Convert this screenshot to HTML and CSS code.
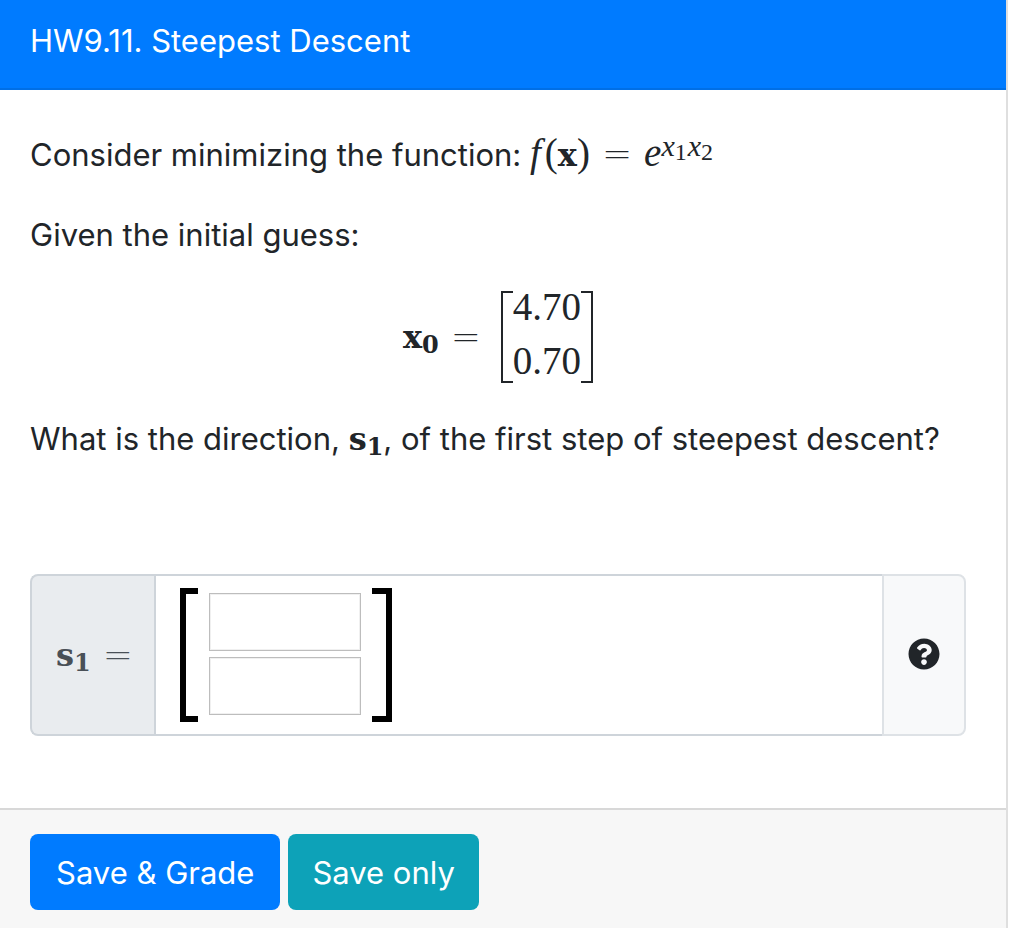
FILE: index.html
```html
<!DOCTYPE html>
<html lang="en">
<head>
<meta charset="utf-8">
<meta name="viewport" content="width=device-width, initial-scale=1">
<title>HW9.11. Steepest Descent</title>
<link rel="stylesheet" href="styles.css">
</head>
<body>
<form class="card">
  <header class="card-header"><h1 class="title">HW9.11. Steepest Descent</h1></header>
  <main class="card-body">
    <p class="text">Consider minimizing the function: <span class="math"><i class="fn">f</i>(<b class="vec">x</b>)<span class="equals">=</span><i>e</i><sup class="sup"><i>x</i><sub class="subsub">1</sub><i>x</i><sub class="subsub">2</sub></sup></span></p>
    <p class="text">Given the initial guess:</p>
    <div class="equation math">
      <span class="term"><b class="vec">x</b><sub class="sub">0</sub></span><span class="equals">=</span>
      <span class="vector"><span>4.70</span><span>0.70</span></span>
    </div>
    <p class="text">What is the direction, <span class="math"><b class="vec">s</b><sub class="sub">1</sub></span>, of the first step of steepest descent?</p>
    <div class="input-group">
      <div class="prefix math"><span class="term"><b class="vec">s</b><sub class="sub">1</sub></span><span class="equals">=</span></div>
      <div class="field">
        <div class="matrix">
          <span class="bracket bracket-left"></span>
          <div class="cells">
            <input class="cell" type="text" aria-label="s1, row 1">
            <input class="cell" type="text" aria-label="s1, row 2">
          </div>
          <span class="bracket bracket-right"></span>
        </div>
      </div>
      <button class="help" type="button" aria-label="Help">
        <svg class="help-icon" viewBox="0 0 512 512" aria-hidden="true"><path fill="currentColor" d="M504 256c0 137-111 248-248 248S8 393 8 256C8 119.100 119 8 256 8s248 111.100 248 248zM262.700 90c-54.500 0-89.300 23-116.500 63.800-3.500 5.300-2.400 12.400 2.700 16.300l34.700 26.300c5.200 3.900 12.600 3 16.700-2.100 17.900-22.700 30.100-35.800 57.300-35.800 20.400 0 45.700 13.100 45.700 33 0 15-12.400 22.700-32.500 34C247.100 238.500 216 254.900 216 296v4c0 6.600 5.400 12 12 12h56c6.600 0 12-5.400 12-12v-1.300c0-28.500 83.200-29.600 83.200-106.700 0-58-60.200-102-116.500-102zM256 338c-25.400 0-46 20.600-46 46s20.600 46 46 46 46-20.600 46-46-20.600-46-46-46z"/></svg>
      </button>
    </div>
  </main>
  <footer class="card-footer">
    <button class="btn btn-primary" type="button">Save &amp; Grade</button>
    <button class="btn btn-info" type="button">Save only</button>
  </footer>
</form>
</body>
</html>
```
FILE: styles.css
```css
* { box-sizing: border-box; }

body {
  margin: 0;
  background: #fff;
  color: #212529;
  font-family: Inter, "Liberation Sans", sans-serif;
  font-size: 31px;
  line-height: 48px;
}

.card {
  display: flex;
  flex-direction: column;
  min-height: 100vh;
  margin-right: 18px;
  border-right: 2px solid #dfdfdf;
}

.card-header {
  padding: 17px 30px 23px;
  background: #007bff;
  border-bottom: 2px solid #006fe6;
}

.title {
  margin: 0;
  font-size: 31px;
  font-weight: 400;
  line-height: 48px;
}

.card-header .title { color: #fff; }

.card-body { padding: 41px 40px 72px 30px; }

.text { margin: 0 0 32px; }

.math {
  font-family: "Liberation Serif", serif;
  font-size: 39px;
  line-height: 1;
}

.fn { margin-right: 4px; }

.vec {
  font-family: "DejaVu Serif", serif;
  font-size: 32px;
  line-height: 0;
}

.equals {
  margin: 0 12px;
  font-family: "DejaVu Sans Light", "DejaVu Sans", sans-serif;
  font-size: 36px;
  font-weight: 200;
  line-height: 0;
}

.sub {
  font-family: "DejaVu Serif", serif;
  font-size: 24px;
  font-weight: 700;
  line-height: 0;
  vertical-align: -5px;
}

.term { padding-bottom: 6px; }

.sup {
  font-size: 30px;
  line-height: 0;
  vertical-align: 10px;
}

.subsub {
  margin-right: 1px;
  font-size: 24px;
  line-height: 0;
  vertical-align: -4px;
}

.equation {
  display: flex;
  align-items: center;
  justify-content: center;
  margin-bottom: 32px;
}

.vector {
  position: relative;
  display: flex;
  flex-direction: column;
  justify-content: center;
  height: 92px;
  margin-left: 8px;
  padding: 0 12px 6px;
  line-height: 54px;
}

.vector::before,
.vector::after {
  content: "";
  position: absolute;
  top: 0;
  bottom: 0;
  width: 10px;
  border: 2px solid #212529;
}

.vector::before { left: 0; border-right: 0; }
.vector::after { right: 0; border-left: 0; }

.input-group {
  display: flex;
  min-height: 162px;
  margin-top: 111px;
}

.prefix {
  display: flex;
  align-items: center;
  width: 124px;
  padding-left: 24px;
  background: #e9ecef;
  border: 2px solid #ced4da;
  border-right: 0;
  border-radius: 8px 0 0 8px;
  color: #495057;
}

.field {
  flex: 1;
  display: flex;
  align-items: center;
  padding: 0 24px;
  border: 2px solid #ced4da;
  border-right: 0;
}

.matrix {
  display: flex;
  gap: 11px;
}

.bracket {
  width: 18px;
  border: 6px solid #000;
}

.bracket-left { border-right: 0; }
.bracket-right { width: 20px; border-left: 0; }

.cells {
  display: flex;
  flex-direction: column;
  gap: 6px;
  padding: 5px 0 7px;
}

.cell {
  width: 152px;
  height: 58px;
  padding: 2px 6px;
  border: 1px solid #bdbdbd;
  box-shadow: inset 0 0 0 1px #f0f0f0;
  background: #fff;
  color: inherit;
  font: inherit;
}

.help {
  display: flex;
  align-items: center;
  justify-content: center;
  width: 84px;
  padding: 0 0 2px;
  background: #f8f9fa;
  border: 2px solid #dee2e6;
  border-radius: 0 8px 8px 0;
  color: #212529;
}

.help-icon { width: 32px; height: 32px; }

.card-footer {
  flex: 1;
  display: flex;
  align-items: flex-start;
  gap: 8px;
  padding: 24px 30px 18px;
  background: #f7f7f7;
  border-top: 2px solid #d8d8d8;
}

.btn {
  padding: 15px 26px 13px;
  border: 0;
  border-radius: 8px;
  color: #fff;
  font: inherit;
}

.btn-primary { background: #007bff; }
.btn-info { padding-left: 24px; padding-right: 24px; background: #0da2b8; }
```
